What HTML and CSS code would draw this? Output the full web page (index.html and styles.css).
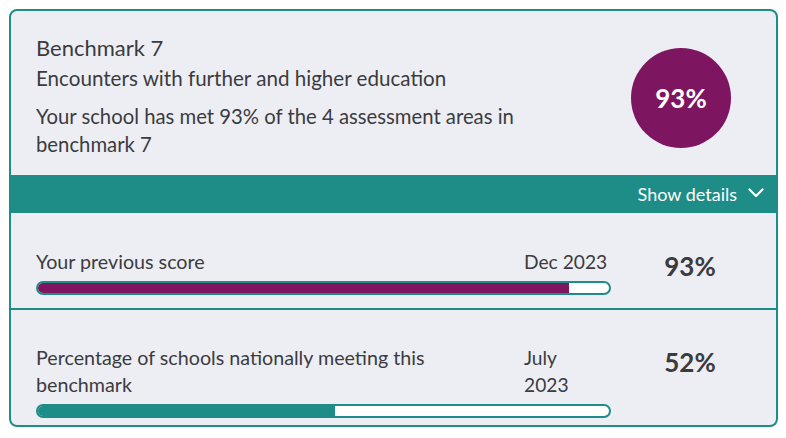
FILE: index.html
```html
<!DOCTYPE html>
<html lang="en">
<head>
<meta charset="utf-8">
<title>Benchmark 7</title>
<link rel="stylesheet" href="styles.css">
</head>
<body>
<div class="card">
  <div class="summary">
    <div class="summary-text">
      <h2 class="title">Benchmark 7</h2>
      <p class="subtitle">Encounters with further and higher education</p>
      <p class="desc">Your school has met 93% of the 4 assessment areas in benchmark 7</p>
    </div>
    <div class="badge">93%</div>
  </div>
  <div class="toggle">
    <span>Show details</span>
    <svg class="chevron" width="16" height="10" viewBox="0 0 16 10"><path d="M1.5 1.5 L8 8 L14.5 1.5" fill="none" stroke="#fff" stroke-width="2.2" stroke-linecap="round" stroke-linejoin="round"/></svg>
  </div>
  <div class="stat">
    <div class="stat-main">
      <div class="stat-head">
        <span class="stat-label">Your previous score</span>
        <span class="stat-date">Dec 2023</span>
      </div>
      <div class="bar"><div class="bar-fill bar-fill--purple" style="width:93%"></div></div>
    </div>
    <div class="stat-value">93%</div>
  </div>
  <div class="stat stat--divided">
    <div class="stat-main">
      <div class="stat-head">
        <span class="stat-label">Percentage of schools nationally meeting this benchmark</span>
        <span class="stat-date stat-date--stack">July 2023</span>
      </div>
      <div class="bar"><div class="bar-fill bar-fill--teal" style="width:52%"></div></div>
    </div>
    <div class="stat-value">52%</div>
  </div>
</div>
</body>
</html>
```
FILE: styles.css
```css
* { box-sizing: border-box; }
html, body { margin: 0; padding: 0; background: #ffffff; }
body {
  font-family: Lato, "Open Sans", sans-serif;
  color: #3b3b3f;
}
.card {
  width: 769px;
  margin: 9px 8px 0 9px;
  border: 2px solid #1e8c87;
  border-radius: 8px;
  background: #edeef4;
  overflow: hidden;
}
.summary {
  display: flex;
  align-items: flex-start;
  justify-content: space-between;
  padding: 22px 45px 17px 25px;
}
.summary-text { width: 530px; }
.title {
  margin: 0;
  font-size: 22px;
  line-height: 30px;
  font-weight: 400;
}
.subtitle {
  margin: 2px 0 0;
  font-size: 20.6px;
  line-height: 26px;
}
.desc {
  margin: 11px 0 0;
  font-size: 20.3px;
  line-height: 28px;
}
.badge {
  width: 100px;
  height: 100px;
  margin-top: 15px;
  border-radius: 50%;
  background: #7e1560;
  color: #ffffff;
  font-size: 26px;
  font-weight: 700;
  display: flex;
  align-items: center;
  justify-content: center;
}
.toggle {
  height: 38px;
  background: #1e8c87;
  color: #ffffff;
  font-size: 18px;
  display: flex;
  align-items: center;
  justify-content: flex-end;
  gap: 11px;
  padding-right: 12px;
}
.chevron { display: block; margin-top: -2px; }
.stat {
  display: flex;
  align-items: flex-start;
  padding: 35px 7px 13px 25px;
}
.stat--divided {
  border-top: 2px solid #1e8c87;
  padding-top: 34px;
  padding-bottom: 7px;
}
.stat-main { width: 575px; }
.stat-head {
  display: flex;
  justify-content: space-between;
  align-items: flex-start;
  font-size: 19.7px;
  line-height: 27px;
  margin-bottom: 6px;
}
.stat-label { width: 460px; }
.stat-date { width: 87px; font-size: 19.2px; }
.stat-date--stack { word-spacing: 100px; }
.bar {
  height: 14px;
  border: 2px solid #1e8c87;
  border-radius: 7px;
  background: #ffffff;
  overflow: hidden;
}
.bar-fill { height: 100%; }
.bar-fill--purple { background: #7e1560; }
.bar-fill--teal { background: #1e8c87; }
.stat-value {
  flex: 1;
  text-align: center;
  font-size: 26px;
  font-weight: 700;
  line-height: 31px;
  margin-top: 3px;
}
```
